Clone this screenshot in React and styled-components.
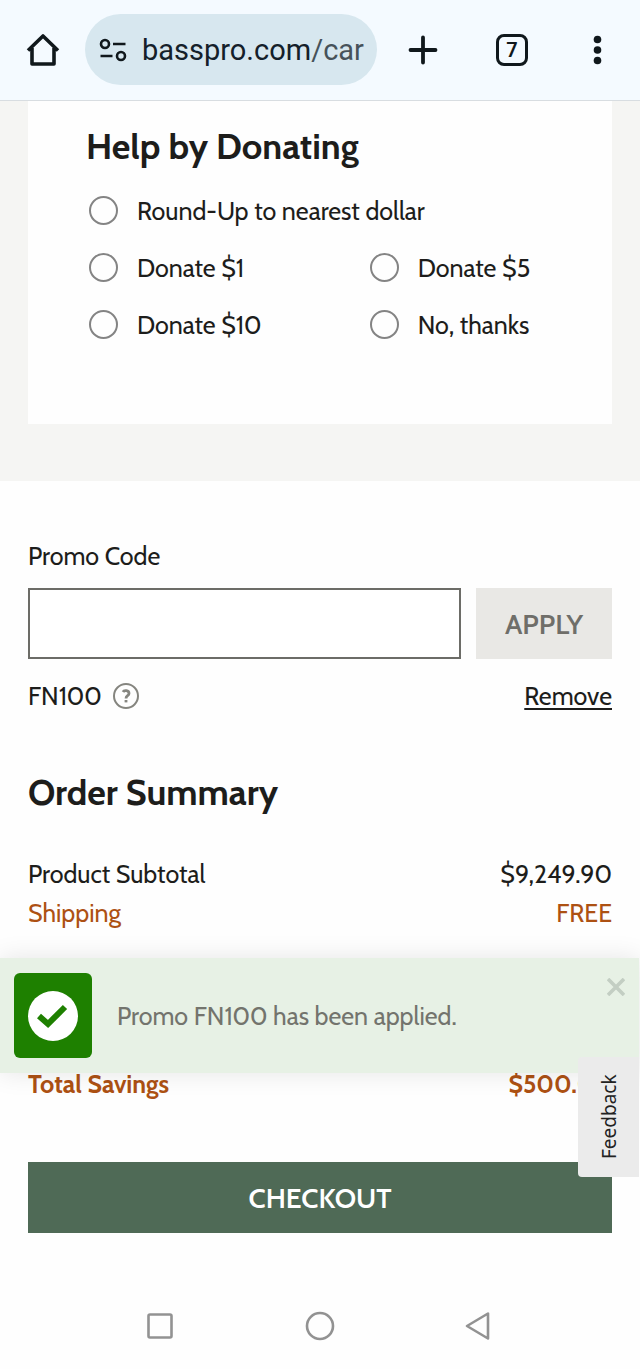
import React from "react";
import styled, { createGlobalStyle } from "styled-components";

const donations = [
  { id: "round-up", label: "Round-Up to nearest dollar", wide: true },
  { id: "donate-1", label: "Donate $1" },
  { id: "donate-5", label: "Donate $5" },
  { id: "donate-10", label: "Donate $10" },
  { id: "no-thanks", label: "No, thanks" },
];

const BrowserBar = () => (
  <Bar>
    <BarButton $width="85px" aria-label="Home">
      <svg width="34" height="34" viewBox="0 0 34 34" fill="none" stroke="#10181c" strokeWidth="3.6" strokeLinejoin="round">
        <path d="M2 17.5 17 3l15 14.5M6 15V31H28V15" />
      </svg>
    </BarButton>
    <AddressBar>
      <svg width="28" height="24" viewBox="0 0 28 24" fill="none" stroke="#10181c" strokeWidth="2.6">
        <circle cx="6" cy="6" r="4" />
        <path d="M14 6h12.500M1.500 18h12" />
        <circle cx="22" cy="18" r="4" />
      </svg>
      <Url>
        basspro.com<span>/car</span>
      </Url>
    </AddressBar>
    <BarButton $width="92px" aria-label="New tab">
      <svg width="30" height="30" viewBox="0 0 30 30" stroke="#10181c" strokeWidth="3.8" strokeLinecap="round">
        <path d="M15 2.500v25M2.500 15h25" />
      </svg>
    </BarButton>
    <BarButton $width="86px" aria-label="Open tabs">
      <TabCount>7</TabCount>
    </BarButton>
    <BarButton $width="85px" aria-label="Menu">
      <svg width="10" height="30" viewBox="0 0 10 30" fill="#10181c">
        <circle cx="4.500" cy="4.500" r="3.800" />
        <circle cx="4.500" cy="15" r="3.800" />
        <circle cx="4.500" cy="25.500" r="3.800" />
      </svg>
    </BarButton>
  </Bar>
);

const Donate = () => (
  <DonateSection>
    <DonateCard>
      <Title>Help by Donating</Title>
      <Options>
        {donations.map(({ id, label, wide }) => (
          <Option key={id} htmlFor={id} $wide={wide}>
            <Radio type="radio" name="donation" id={id} />
            {label}
          </Option>
        ))}
      </Options>
    </DonateCard>
  </DonateSection>
);

const Toast = () => (
  <ToastBox role="status">
    <ToastIcon>
      <svg width="50" height="50" viewBox="0 0 50 50">
        <circle cx="25" cy="25" r="25" fill="#fff" />
        <path d="M11 25l9 8 17-17" fill="none" stroke="#1e8000" strokeWidth="6" />
      </svg>
    </ToastIcon>
    <p>Promo FN100 has been applied.</p>
    <ToastClose aria-label="Close">
      <svg width="18" height="18" viewBox="0 0 18 18" stroke="#c3cec3" strokeWidth="3.600">
        <path d="M1 1l16 16M17 1L1 17" />
      </svg>
    </ToastClose>
  </ToastBox>
);

const App = () => {
  return (
    <Page>
      <GlobalStyle />
      <BrowserBar />
      <Donate />
      <Summary>
        <PromoLabel htmlFor="promo">Promo Code</PromoLabel>
        <PromoForm onSubmit={(e) => e.preventDefault()}>
          <PromoInput id="promo" type="text" />
          <ApplyButton>APPLY</ApplyButton>
        </PromoForm>
        <AppliedCode>
          <span>FN100</span>
          <HelpButton aria-label="About this promo">
            <svg width="26" height="26" viewBox="0 0 26 26" fill="none" stroke="#85857f" strokeWidth="2">
              <circle cx="13" cy="13" r="12" />
              <path d="M10 9C11 7 16 7 16 10.500C16 13 13 12.500 13 15.500" strokeWidth="2.800" />
              <path d="M13 17v2.400" strokeWidth="2.800" />
            </svg>
          </HelpButton>
          <a href="#remove">Remove</a>
        </AppliedCode>
        <Title>Order Summary</Title>
        <Totals>
          <Line>
            <dt>Product Subtotal</dt>
            <dd>$9,249.90</dd>
          </Line>
          <Line $accent>
            <dt>Shipping</dt>
            <dd>FREE</dd>
          </Line>
          <Line $accent $final>
            <dt>Total Savings</dt>
            <dd>$500.00</dd>
          </Line>
        </Totals>
        <CheckoutButton>CHECKOUT</CheckoutButton>
        <Toast />
        <FeedbackTab>Feedback</FeedbackTab>
      </Summary>
      <SystemNav>
        <button aria-label="Recent apps">
          <svg width="30" height="30" viewBox="0 0 30 30">
            <rect x="3.500" y="3.500" width="23" height="23" rx="1.500" />
          </svg>
        </button>
        <button aria-label="Home screen">
          <svg width="30" height="30" viewBox="0 0 30 30">
            <circle cx="15" cy="15" r="13" />
          </svg>
        </button>
        <button aria-label="Back">
          <svg width="30" height="30" viewBox="0 0 30 30">
            <path d="M2 15 23 2.500v25z" />
          </svg>
        </button>
      </SystemNav>
    </Page>
  );
};

export default App;

const GlobalStyle = createGlobalStyle`
  * {
    box-sizing: border-box;
  }
  body {
    margin: 0;
    background: #fefefe;
    color: #1d1d1b;
    font-family: Cabin, Lato, sans-serif;
    font-size: 25px;
    line-height: 32px;
  }
  button {
    padding: 0;
    border: 0;
    background: none;
    color: inherit;
    font: inherit;
    cursor: pointer;
  }
  p, dl, dd {
    margin: 0;
  }
`;

const Page = styled.div`
  display: flex;
  flex-direction: column;
  min-height: 100vh;
`;

const Bar = styled.header`
  display: flex;
  align-items: center;
  padding: 14px 0 15px;
  background: #f4faff;
  border-bottom: 1px solid #d8dde1;
`;

const BarButton = styled.button`
  display: flex;
  align-items: center;
  justify-content: center;
  width: ${({ $width }) => $width};
  height: 71px;
`;

const AddressBar = styled.div`
  display: flex;
  flex: 1;
  align-items: center;
  gap: 15px;
  height: 71px;
  padding-left: 14px;
  border-radius: 36px;
  background: #d7e7ef;
  overflow: hidden;
  svg {
    flex-shrink: 0;
  }
`;

const Url = styled.span`
  color: #14202a;
  font-family: Roboto, sans-serif;
  font-size: 29px;
  white-space: nowrap;
  span {
    color: #46525a;
  }
`;

const TabCount = styled.span`
  width: 32px;
  height: 32px;
  border: 3px solid #10181c;
  border-radius: 8px;
  color: #10181c;
  font-family: Roboto, sans-serif;
  font-size: 20px;
  font-weight: 600;
  line-height: 27px;
`;

const DonateSection = styled.section`
  padding: 0 28px 57px;
  background: #f5f5f3;
`;

const DonateCard = styled.div`
  padding: 21px 58px 71px;
  background: #fefefe;
`;

const Title = styled.h2`
  margin: 0;
  font-size: 36px;
  font-weight: 700;
  line-height: 48px;
`;

const Options = styled.div`
  display: grid;
  grid-template-columns: 3fr 2fr;
  margin-top: 12px;
`;

const Option = styled.label`
  grid-column: ${({ $wide }) => ($wide ? "1 / -1" : "auto")};
  display: flex;
  align-items: center;
  gap: 19px;
  height: 57px;
  padding-left: 3px;
  white-space: nowrap;
`;

const Radio = styled.input`
  appearance: none;
  width: 29px;
  height: 29px;
  margin: 0;
  border: 2px solid #848484;
  border-radius: 50%;
  &:checked {
    background: #4f6a56;
    box-shadow: inset 0 0 0 5px #fefefe;
  }
`;

const Summary = styled.main`
  position: relative;
  flex: 1;
  display: flex;
  flex-direction: column;
  padding: 59px 28px 50px;
`;

const PromoLabel = styled.label`
  margin-bottom: 16px;
`;

const PromoForm = styled.form`
  display: flex;
  gap: 15px;
`;

const PromoInput = styled.input`
  flex: 1;
  min-width: 0;
  height: 71px;
  padding: 0 16px;
  border: 2px solid #6c6c67;
  border-radius: 0;
  background: #fff;
  font: inherit;
`;

const ApplyButton = styled.button`
  width: 136px;
  background: #e9e8e5;
  color: #6f6e69;
  font-size: 28px;
  font-weight: 600;
`;

const AppliedCode = styled.div`
  display: flex;
  align-items: center;
  gap: 11px;
  margin: 21px 0 56px;
  a {
    margin-left: auto;
    color: inherit;
    text-decoration-thickness: 2px;
    text-underline-offset: 3px;
  }
`;

const HelpButton = styled.button`
  display: flex;
`;

const Totals = styled.dl`
  margin: 39px 0 58px;
`;

const Line = styled.div`
  display: flex;
  justify-content: space-between;
  margin-top: ${({ $final }) => ($final ? "132px" : "0")};
  color: ${({ $accent }) => ($accent ? "#ad5113" : "inherit")};
  font-weight: ${({ $final }) => ($final ? 700 : 400)};
  line-height: 39px;
`;

const CheckoutButton = styled.button`
  height: 71px;
  background: #4f6a56;
  color: #fff;
  font-size: 28px;
  font-weight: 600;
`;

const ToastBox = styled.div`
  position: absolute;
  right: 1px;
  bottom: 210px;
  left: 0;
  display: flex;
  align-items: center;
  gap: 25px;
  padding: 15px 14px;
  background: #e7f1e5;
  box-shadow: 0 0 24px rgba(0, 0, 0, 0.1);
  color: #73746d;
`;

const ToastIcon = styled.div`
  display: flex;
  align-items: center;
  justify-content: center;
  width: 78px;
  height: 85px;
  border-radius: 6px;
  background: #1e8000;
`;

const ToastClose = styled.button`
  display: flex;
  align-self: flex-start;
  margin: 5px 0 0 auto;
`;

const FeedbackTab = styled.button`
  position: absolute;
  right: 1px;
  bottom: 106px;
  width: 61px;
  height: 120px;
  border-radius: 0 4px 4px 0;
  background: #ebebeb;
  color: #222;
  font-family: "Noto Sans", sans-serif;
  font-size: 19px;
  writing-mode: vertical-rl;
  transform: rotate(180deg);
`;

const SystemNav = styled.nav`
  display: flex;
  justify-content: space-around;
  padding: 28px 80px;
  button {
    display: flex;
  }
  svg {
    fill: none;
    stroke: #929292;
    stroke-width: 2.6px;
    stroke-linejoin: round;
  }
`;
